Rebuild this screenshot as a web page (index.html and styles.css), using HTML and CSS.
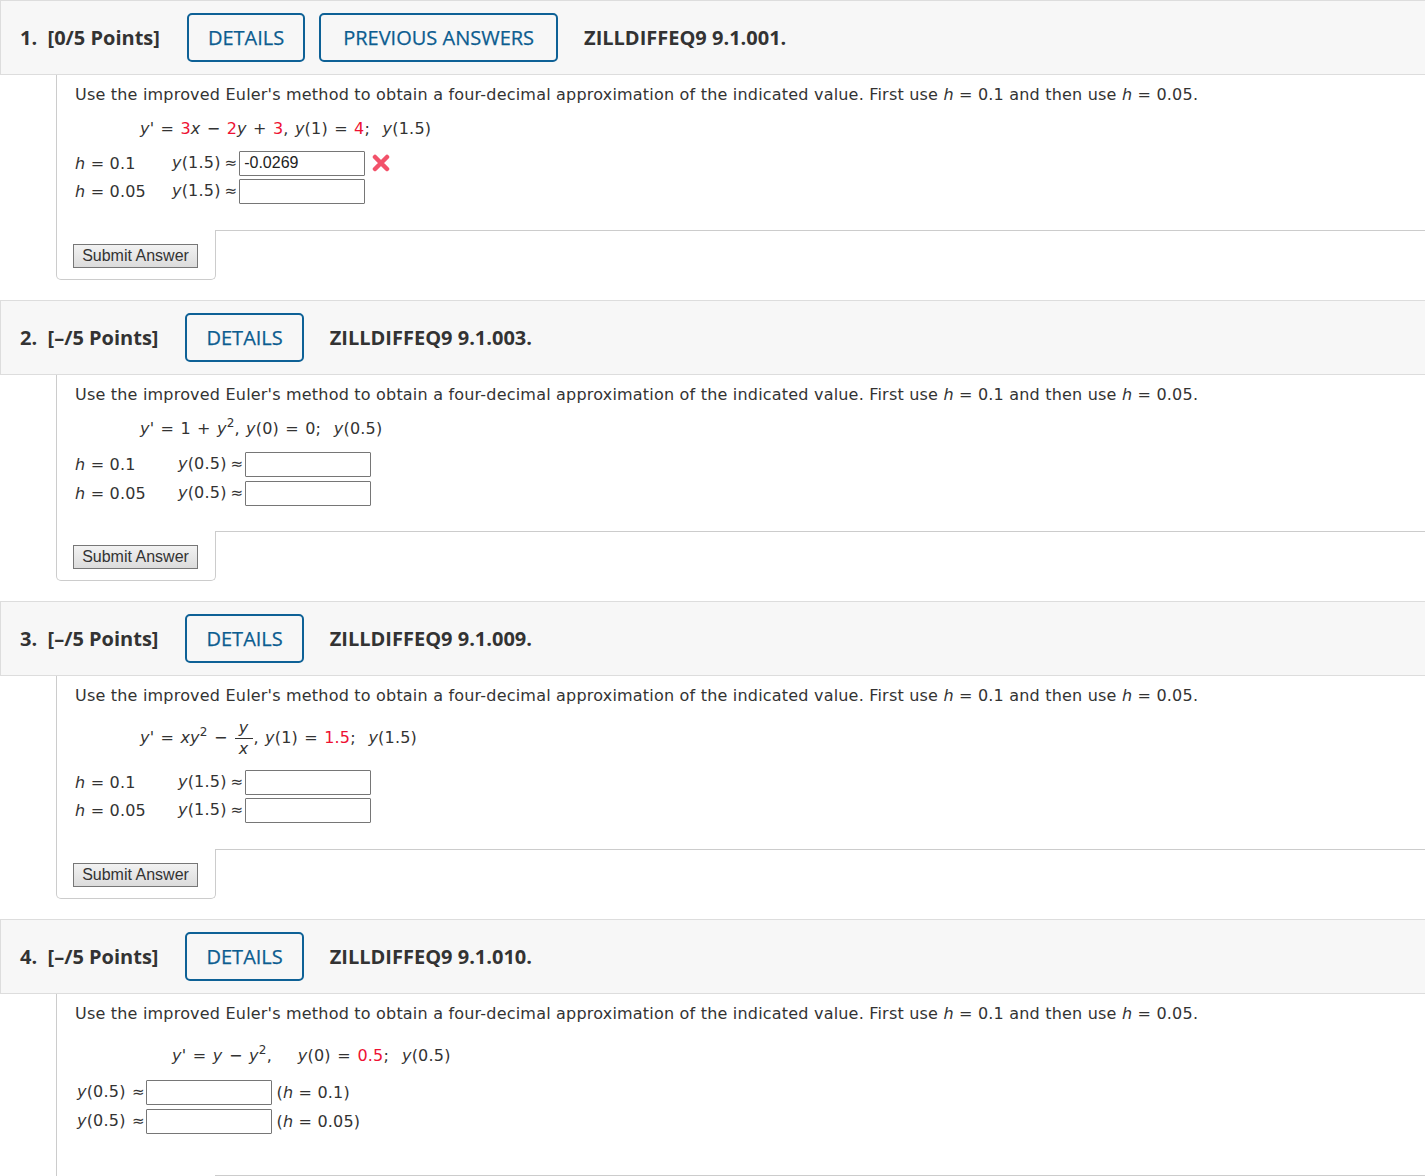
FILE: index.html
```html
<!DOCTYPE html>
<html lang="en">
<head>
<meta charset="utf-8">
<title>Questions</title>
<link rel="stylesheet" href="styles.css">
</head>
<body>

<div class="question">
  <div class="qhead">
    <span class="qnum">1.&nbsp; [0/5 Points]</span>
    <span class="hbtn">DETAILS</span>
    <span class="hbtn hbtn-wide">PREVIOUS ANSWERS</span>
    <span class="qcode">ZILLDIFFEQ9 9.1.001.</span>
  </div>
  <div class="qbody">
    <p class="qtext">Use the improved Euler's method to obtain a four-decimal approximation of the indicated value. First use <i>h</i> = 0.1 and then use <i>h</i> = 0.05.</p>
    <div class="eq"><i>y</i>' = <span class="red">3</span><i>x</i> − <span class="red">2</span><i>y</i> + <span class="red">3</span>, <i>y</i>(1) = <span class="red">4</span>;&nbsp; <i>y</i>(1.5)</div>
    <table class="ans ans-a">
      <tr><td class="c1"><i>h</i> = 0.1</td><td><i>y</i>(1.5)<span class="approx">≈</span><input class="field" type="text" value="-0.0269"><svg class="wrong" width="18" height="18" viewBox="0 0 18 18"><path d="M3 3 L15 15 M15 3 L3 15" stroke="#f2526a" stroke-width="4.5" stroke-linecap="round"/></svg></td></tr>
      <tr><td class="c1"><i>h</i> = 0.05</td><td><i>y</i>(1.5)<span class="approx">≈</span><input class="field" type="text" value=""></td></tr>
    </table>
  </div>
  <div class="qfoot">
    <div class="tab"><span class="submit">Submit Answer</span></div>
    <div class="rest"></div>
  </div>
</div>

<div class="question">
  <div class="qhead">
    <span class="qnum">2.&nbsp; [–/5 Points]</span>
    <span class="hbtn">DETAILS</span>
    <span class="qcode">ZILLDIFFEQ9 9.1.003.</span>
  </div>
  <div class="qbody qbody-b">
    <p class="qtext">Use the improved Euler's method to obtain a four-decimal approximation of the indicated value. First use <i>h</i> = 0.1 and then use <i>h</i> = 0.05.</p>
    <div class="eq"><i>y</i>' = 1 + <i>y</i><sup>2</sup>, <i>y</i>(0) = 0;&nbsp; <i>y</i>(0.5)</div>
    <table class="ans ans-b">
      <tr><td class="c1"><i>h</i> = 0.1</td><td><i>y</i>(0.5)<span class="approx">≈</span><input class="field" type="text" value=""></td></tr>
      <tr><td class="c1"><i>h</i> = 0.05</td><td><i>y</i>(0.5)<span class="approx">≈</span><input class="field" type="text" value=""></td></tr>
    </table>
  </div>
  <div class="qfoot">
    <div class="tab"><span class="submit">Submit Answer</span></div>
    <div class="rest"></div>
  </div>
</div>

<div class="question">
  <div class="qhead">
    <span class="qnum">3.&nbsp; [–/5 Points]</span>
    <span class="hbtn">DETAILS</span>
    <span class="qcode">ZILLDIFFEQ9 9.1.009.</span>
  </div>
  <div class="qbody qbody-c">
    <p class="qtext">Use the improved Euler's method to obtain a four-decimal approximation of the indicated value. First use <i>h</i> = 0.1 and then use <i>h</i> = 0.05.</p>
    <div class="eq eq-frac"><i>y</i>' = <i>xy</i><sup>2</sup> − <span class="frac"><span class="num"><i>y</i></span><span class="den"><i>x</i></span></span>, <i>y</i>(1) = <span class="red">1.5</span>;&nbsp; <i>y</i>(1.5)</div>
    <table class="ans ans-c">
      <tr><td class="c1"><i>h</i> = 0.1</td><td><i>y</i>(1.5)<span class="approx">≈</span><input class="field" type="text" value=""></td></tr>
      <tr><td class="c1"><i>h</i> = 0.05</td><td><i>y</i>(1.5)<span class="approx">≈</span><input class="field" type="text" value=""></td></tr>
    </table>
  </div>
  <div class="qfoot">
    <div class="tab"><span class="submit">Submit Answer</span></div>
    <div class="rest"></div>
  </div>
</div>

<div class="question">
  <div class="qhead">
    <span class="qnum">4.&nbsp; [–/5 Points]</span>
    <span class="hbtn">DETAILS</span>
    <span class="qcode">ZILLDIFFEQ9 9.1.010.</span>
  </div>
  <div class="qbody qbody-d">
    <p class="qtext">Use the improved Euler's method to obtain a four-decimal approximation of the indicated value. First use <i>h</i> = 0.1 and then use <i>h</i> = 0.05.</p>
    <div class="eq eq-d"><i>y</i>' = <i>y</i> − <i>y</i><sup>2</sup>,&nbsp;&nbsp;&nbsp; <i>y</i>(0) = <span class="red">0.5</span>;&nbsp; <i>y</i>(0.5)</div>
    <table class="ans ans-d">
      <tr><td><i>y</i>(0.5) <span class="approx">≈</span><input class="field" type="text" value=""></td><td class="hnote">(<i>h</i> = 0.1)</td></tr>
      <tr><td><i>y</i>(0.5) <span class="approx">≈</span><input class="field" type="text" value=""></td><td class="hnote">(<i>h</i> = 0.05)</td></tr>
    </table>
  </div>
  <div class="qfoot">
    <div class="tab tab-empty"></div>
    <div class="rest"></div>
  </div>
</div>

</body>
</html>
```

FILE: styles.css
```css
html, body {
  margin: 0;
  padding: 0;
  background: #ffffff;
  overflow: hidden;
}

body {
  font-family: "DejaVu Sans", Verdana, sans-serif;
  color: #333333;
}

.question {
  margin-bottom: 20px;
}

.qhead {
  display: flex;
  align-items: center;
  height: 73px;
  background: #f7f7f7;
  border-top: 1px solid #dddddd;
  border-bottom: 1px solid #dddddd;
  border-left: 1px solid #dddddd;
  padding-left: 19px;
  font-family: "Open Sans", sans-serif;
}

.qnum {
  font-size: 20px;
  font-weight: 700;
  color: #333333;
  margin-right: 27px;
}

.hbtn {
  display: inline-flex;
  align-items: center;
  height: 45px;
  padding: 0 19px;
  border: 2px solid #0e6196;
  border-radius: 5px;
  color: #0c5d90;
  font-size: 20px;
  font-weight: 400;
  margin-right: 14px;
  -webkit-text-stroke: 0.25px #0c5d90;
}

.hbtn-wide {
  padding: 0 22px;
}

.qcode {
  font-size: 20px;
  font-weight: 700;
  color: #333333;
  margin-left: 12px;
}

.qbody {
  margin-left: 56px;
  border-left: 1px solid #cccccc;
  padding: 10px 0 25px 18px;
  font-size: 16px;
  letter-spacing: 0.2px;
}

.qbody-b {
  padding-bottom: 24px;
}

.qbody-c {
  padding-bottom: 25px;
}

.qbody-d {
  padding-bottom: 40px;
}

.qtext {
  margin: 0;
  line-height: 20px;
  font-size: 16px;
}

i {
  font-style: italic;
}

.red {
  color: #ee1133;
}

sup {
  font-size: 12px;
  line-height: 0;
  vertical-align: 7px;
}

.eq {
  margin: 14px 0 0 65px;
  line-height: 20px;
  word-spacing: 1px;
}

.eq-frac {
  margin-top: 10px;
  line-height: 44px;
}

.eq-d {
  margin: 22px 0 0 97px;
  word-spacing: 1.2px;
}

.frac {
  display: inline-flex;
  flex-direction: column;
  align-items: center;
  vertical-align: middle;
  font-size: 16px;
  line-height: 20px;
  margin: 0 1px;
  word-spacing: 0;
}

.frac .num {
  border-bottom: 1px solid #333333;
  padding: 0 4px;
}

.frac .den {
  padding: 0 4px;
}

.ans {
  border-collapse: collapse;
  margin-top: 10px;
}

.ans td {
  padding: 0;
  height: 28px;
  vertical-align: middle;
  white-space: nowrap;
}

.ans-a .c1 {
  width: 97px;
}

.ans-b .c1,
.ans-c .c1 {
  width: 103px;
}

.ans-b {
  margin-top: 11px;
}

.ans-b tr:first-child td {
  height: 29px;
}

.ans-c {
  margin-top: 8px;
}

.ans-d {
  margin-top: 12px;
  margin-left: 2px;
}

.ans-d tr:first-child td {
  height: 29px;
}

.approx {
  font-size: 15px;
  margin: 0 2px 0 4px;
  letter-spacing: 0;
}

.ans-d .approx {
  margin-left: 1px;
}

.field {
  box-sizing: border-box;
  width: 126px;
  height: 25px;
  border: 1px solid #767676;
  border-radius: 1px;
  padding: 0 4px;
  font-family: "Liberation Sans", Arial, sans-serif;
  font-size: 16px;
  letter-spacing: 0;
  color: #222222;
  vertical-align: middle;
  margin: 0;
}

.wrong {
  vertical-align: middle;
  margin-left: 7px;
}

.hnote {
  padding-left: 4px !important;
}

.qfoot {
  display: flex;
  margin-left: 56px;
}

.tab {
  box-sizing: border-box;
  width: 160px;
  height: 50px;
  border: 1px solid #cccccc;
  border-top: none;
  border-radius: 0 0 5px 5px;
  padding: 14px 0 0 16px;
}

.tab-empty {
  height: 40px;
  border-bottom: none;
}

.rest {
  flex: 1;
  border-top: 1px solid #cccccc;
}

.submit {
  display: inline-block;
  box-sizing: border-box;
  width: 125px;
  height: 24px;
  line-height: 22px;
  text-align: center;
  border: 1px solid #777777;
  background: linear-gradient(#f2f2f2, #dcdcdc);
  font-family: "Liberation Sans", Arial, sans-serif;
  font-size: 16px;
  color: #333333;
}
```
